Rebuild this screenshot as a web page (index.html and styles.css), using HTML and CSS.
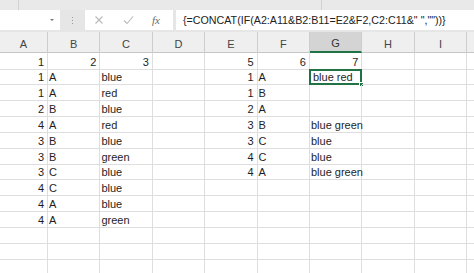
FILE: index.html
```html
<!DOCTYPE html>
<html>
<head>
<meta charset="utf-8">
<link rel="stylesheet" href="styles.css">
</head>
<body>
<div class="app">
  <div class="ribbon">
    <div class="rb rb1"></div>
    <div class="rb rb2"></div>
  </div>
  <div class="fbar">
    <div class="namebox"><span class="caret"></span></div>
    <div class="grip"><span></span><span></span><span></span></div>
    <div class="btns">
      <svg class="ic" width="10" height="10" viewBox="0 0 10 10"><path d="M1.5 1.5 L8.5 8.5 M8.5 1.5 L1.5 8.5" stroke="#b9b9b9" stroke-width="1.1" fill="none"/></svg>
      <svg class="ic" width="11" height="10" viewBox="0 0 11 10"><path d="M1 5.5 L4 8.5 L10 1.5" stroke="#b9b9b9" stroke-width="1.1" fill="none"/></svg>
      <span class="fx">fx</span>
    </div>
    <div class="formula">{=CONCAT(IF(A2:A11&amp;B2:B11=E2&amp;F2,C2:C11&amp;" ",""))}</div>
  </div>
  <div class="sheet">
    <div class="hd">A</div><div class="hd">B</div><div class="hd">C</div><div class="hd">D</div><div class="hd">E</div><div class="hd">F</div><div class="hd sel">G</div><div class="hd">H</div><div class="hd">I</div><div class="hd"></div>

    <div class="c r1 n">1</div><div class="c r1 n">2</div><div class="c r1 n">3</div><div class="c r1"></div><div class="c r1 n">5</div><div class="c r1 n">6</div><div class="c r1 n">7</div><div class="c r1"></div><div class="c r1"></div><div class="c r1"></div>

    <div class="c n">1</div><div class="c">A</div><div class="c">blue</div><div class="c"></div><div class="c n">1</div><div class="c">A</div><div class="c active">blue red<span class="handle"></span></div><div class="c"></div><div class="c"></div><div class="c"></div>

    <div class="c n">1</div><div class="c">A</div><div class="c">red</div><div class="c"></div><div class="c n">1</div><div class="c">B</div><div class="c"></div><div class="c"></div><div class="c"></div><div class="c"></div>

    <div class="c n">2</div><div class="c">B</div><div class="c">blue</div><div class="c"></div><div class="c n">2</div><div class="c">A</div><div class="c"></div><div class="c"></div><div class="c"></div><div class="c"></div>

    <div class="c n">4</div><div class="c">A</div><div class="c">red</div><div class="c"></div><div class="c n">3</div><div class="c">B</div><div class="c">blue green</div><div class="c"></div><div class="c"></div><div class="c"></div>

    <div class="c n">3</div><div class="c">B</div><div class="c">blue</div><div class="c"></div><div class="c n">3</div><div class="c">C</div><div class="c">blue</div><div class="c"></div><div class="c"></div><div class="c"></div>

    <div class="c n">3</div><div class="c">B</div><div class="c">green</div><div class="c"></div><div class="c n">4</div><div class="c">C</div><div class="c">blue</div><div class="c"></div><div class="c"></div><div class="c"></div>

    <div class="c n">3</div><div class="c">C</div><div class="c">blue</div><div class="c"></div><div class="c n">4</div><div class="c">A</div><div class="c">blue green</div><div class="c"></div><div class="c"></div><div class="c"></div>

    <div class="c n">4</div><div class="c">C</div><div class="c">blue</div><div class="c"></div><div class="c"></div><div class="c"></div><div class="c"></div><div class="c"></div><div class="c"></div><div class="c"></div>

    <div class="c n">4</div><div class="c">A</div><div class="c">blue</div><div class="c"></div><div class="c"></div><div class="c"></div><div class="c"></div><div class="c"></div><div class="c"></div><div class="c"></div>

    <div class="c n">4</div><div class="c">A</div><div class="c">green</div><div class="c"></div><div class="c"></div><div class="c"></div><div class="c"></div><div class="c"></div><div class="c"></div><div class="c"></div>

    <div class="c"></div><div class="c"></div><div class="c"></div><div class="c"></div><div class="c"></div><div class="c"></div><div class="c"></div><div class="c"></div><div class="c"></div><div class="c"></div>
    <div class="c"></div><div class="c"></div><div class="c"></div><div class="c"></div><div class="c"></div><div class="c"></div><div class="c"></div><div class="c"></div><div class="c"></div><div class="c"></div>
    <div class="c"></div><div class="c"></div><div class="c"></div><div class="c"></div><div class="c"></div><div class="c"></div><div class="c"></div><div class="c"></div><div class="c"></div><div class="c"></div>
  </div>
</div>
</body>
</html>
```
FILE: styles.css
```css
* { box-sizing: border-box; }
html, body { margin: 0; padding: 0; background: #fff; }
.app {
  width: 474px;
  height: 273px;
  overflow: hidden;
  font-family: "Liberation Sans", Arial, sans-serif;
  color: #1e1e1e;
  background: #e6e6e6;
}
.ribbon {
  height: 10px;
  display: flex;
  background: #e9e9e9;
}
.rb { height: 100%; border-right: 1px solid #d2d2d2; }
.rb1 { width: 19px; }
.rb2 { width: 303px; }
.fbar {
  height: 22px;
  display: flex;
  align-items: stretch;
  padding-bottom: 2px;
  background: #e6e6e6;
}
.namebox {
  width: 60px;
  background: #fff;
  position: relative;
}
.caret {
  position: absolute;
  right: 6px;
  top: 9px;
  border-left: 2px solid transparent;
  border-right: 2px solid transparent;
  border-top: 2px solid #777;
}
.grip {
  width: 25px;
  display: flex;
  flex-direction: column;
  align-items: center;
  justify-content: center;
  gap: 2px;
}
.grip span { width: 1px; height: 1px; background: #9a9a9a; }
.btns {
  width: 88px;
  background: #fff;
  display: flex;
  align-items: center;
  padding-left: 9px;
  gap: 19px;
}
.fx {
  font-family: "Liberation Serif", serif;
  font-style: italic;
  font-size: 11px;
  color: #6a6a6a;
  margin-left: -1px;
}
.formula {
  flex: 1;
  margin-left: 3px;
  background: #fff;
  padding-left: 7px;
  font-size: 10.7px;
  line-height: 20px;
  color: #222;
  white-space: nowrap;
}
.sheet {
  display: grid;
  grid-template-columns: 48px repeat(9, 52.4px);
  grid-template-rows: 21px 16.5px repeat(13, 15.85px);
  background: #fff;
}
.hd {
  background: #efefef;
  border-right: 1px solid #cdcdcd;
  border-bottom: 1px solid #c6c6c6;
  font-size: 11px;
  color: #444;
  display: flex;
  align-items: center;
  justify-content: center;
  padding-top: 3px;
}
.hd.sel {
  background: #d4d4d4;
  border-bottom: 2px solid #217346;
  color: #333;
}
.c {
  position: relative;
  border-right: 1px solid #dedede;
  border-bottom: 1px solid #dedede;
  font-size: 11px;
  line-height: 11px;
  display: flex;
  align-items: flex-end;
  padding: 0 3px 1px 1px;
  white-space: nowrap;
  color: #1e1e1e;
}
.c.n { justify-content: flex-end; }
.c.active {
  border: 2px solid #217346;
  margin: -1px 0 0 -1px;
  padding: 0 2px 0 2px;
}
.handle {
  position: absolute;
  right: -4px;
  bottom: -4px;
  width: 5px;
  height: 5px;
  background: #217346;
  border: 1px solid #fff;
}
```
